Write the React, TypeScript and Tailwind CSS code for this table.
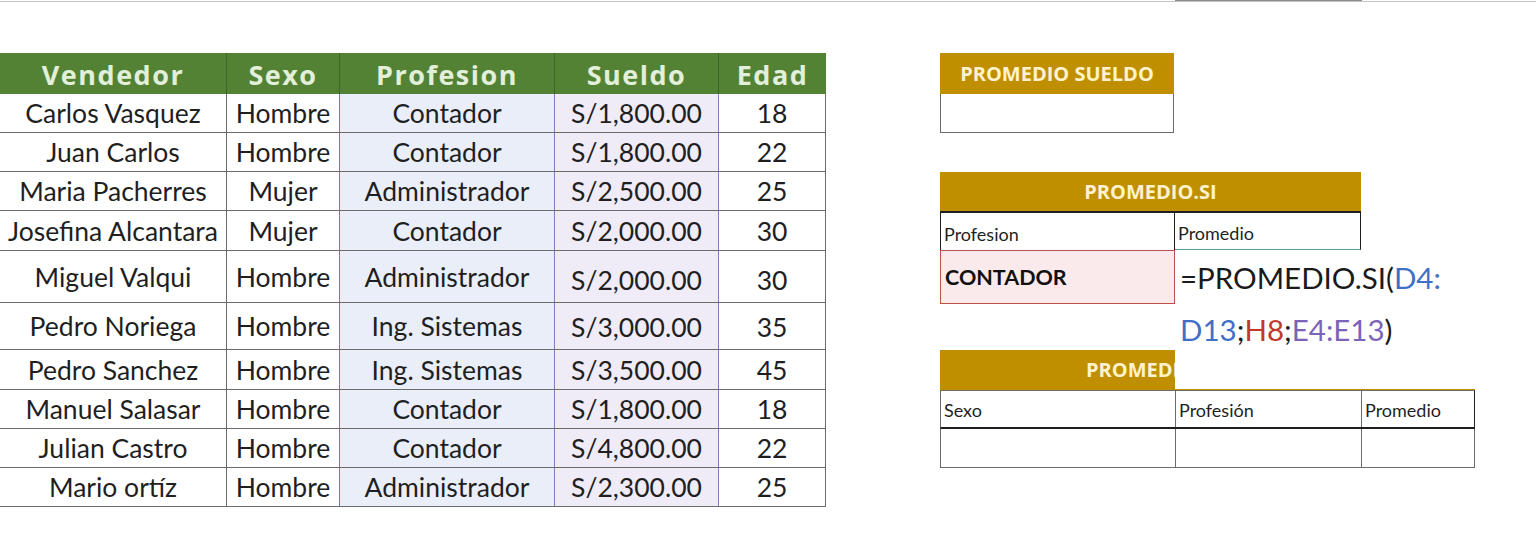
const rows = [
  { v: 'Carlos Vasquez', s: 'Hombre', p: 'Contador', m: 'S/1,800.00', e: '18', h: 'h-[39px]' },
  { v: 'Juan Carlos', s: 'Hombre', p: 'Contador', m: 'S/1,800.00', e: '22', h: 'h-[39px]' },
  { v: 'Maria Pacherres', s: 'Mujer', p: 'Administrador', m: 'S/2,500.00', e: '25', h: 'h-[39px]' },
  { v: 'Josefina Alcantara', s: 'Mujer', p: 'Contador', m: 'S/2,000.00', e: '30', h: 'h-[40px]' },
  { v: 'Miguel Valqui', s: 'Hombre', p: 'Administrador', m: 'S/2,000.00', e: '30', h: 'h-[52px]', low: true },
  { v: 'Pedro Noriega', s: 'Hombre', p: 'Ing. Sistemas', m: 'S/3,000.00', e: '35', h: 'h-[47px]', low: true },
  { v: 'Pedro Sanchez', s: 'Hombre', p: 'Ing. Sistemas', m: 'S/3,500.00', e: '45', h: 'h-[40px]' },
  { v: 'Manuel Salasar', s: 'Hombre', p: 'Contador', m: 'S/1,800.00', e: '18', h: 'h-[39px]' },
  { v: 'Julian Castro', s: 'Hombre', p: 'Contador', m: 'S/4,800.00', e: '22', h: 'h-[39px]' },
  { v: 'Mario ortíz', s: 'Hombre', p: 'Administrador', m: 'S/2,300.00', e: '25', h: 'h-[39px]' },
]

const heads = ['Vendedor', 'Sexo', 'Profesion', 'Sueldo', 'Edad']

export default function App() {
  return (
    <div className="w-[1536px] h-[543px] bg-white overflow-hidden relative font-['Lato',sans-serif] text-[#1f1f1f]">
      {/* strip at the top */}
      <div className="flex h-[2px] border-b border-[#c4c4c4]">
        <div className="w-[1175px]" />
        <div className="w-[187px] border-b border-[#8a8a8a]" />
      </div>

      <div className="flex pt-[51px]">
        {/* main table */}
        <div className="w-[826px]">
          <div className="grid grid-cols-[227px_113px_215px_164px_107px] h-[41px] bg-[#548235] leading-[32px]">
            {heads.map((t, i) => (
              <div
                key={t}
                className={`flex items-center justify-center pt-[3px] text-[27px] font-bold tracking-[1.5px] text-[#e2efda] font-['Open_Sans',sans-serif] ${
                  i < 4 ? 'border-r border-[#3f6328]' : ''
                }`}
              >
                {t}
              </div>
            ))}
          </div>
          {rows.map((r) => (
            <div
              key={r.v}
              className={`grid grid-cols-[227px_113px_215px_164px_107px] ${r.h} text-[26.5px] leading-[30px] border-b border-[#6b6b6b] overflow-hidden`}
            >
              <div className="flex items-center justify-center border-r border-[#6b6b6b] whitespace-nowrap">{r.v}</div>
              <div className="flex items-center justify-center border-r border-[#5b7fc6]">{r.s}</div>
              <div className="flex items-center justify-center bg-[#e9eef9] border-r border-[#8a78b8]">{r.p}</div>
              <div className={`flex justify-center bg-[#efecf8] border-r border-[#8a78b8] ${r.low ? 'items-end pb-[7px]' : 'items-center'}`}>
                {r.m}
              </div>
              <div className={`flex justify-center border-r border-[#6b6b6b] ${r.low ? 'items-end pb-[7px]' : 'items-center'}`}>
                {r.e}
              </div>
            </div>
          ))}
        </div>

        {/* right side */}
        <div className="ml-[114px] w-[540px] flex flex-col relative">
          <div className="w-[234px]">
            <div className="h-[41px] bg-[#bf8f00] flex items-center justify-center text-[20px] font-bold text-[#fff2cc] font-['Open_Sans',sans-serif]">
              PROMEDIO SUELDO
            </div>
            <div className="h-[39px] border border-t-0 border-[#6b6b6b]" />
          </div>

          <div className="mt-[39px] w-[421px]">
            <div className="h-[39px] bg-[#bf8f00] flex items-center justify-center text-[20px] font-bold text-[#fff2cc] font-['Open_Sans',sans-serif]">
              PROMEDIO.SI
            </div>
            <div className="grid grid-cols-[235px_186px] h-[39px] border-t-2 border-[#1f1f1f] text-[18px]">
              <div className="border-l border-r border-[#1f1f1f] flex items-end pl-[3px] pb-[2px]">Profesion</div>
              <div className="border-r border-b border-[#1f1f1f] border-b-[#5f9ea0] flex items-end pl-[3px] pb-[2px]">Promedio</div>
            </div>
            <div className="w-[235px] h-[54px] bg-[#fbeaec] border border-[#c0504d] flex items-center pl-[4px] text-[21.5px] font-bold text-[#111]">
              CONTADOR
            </div>
          </div>

          <div className="mt-[46px] w-[535px]">
            <div className="h-[40px] bg-[#bf8f00] flex items-center pl-[146px] text-[20px] font-bold text-[#fff2cc] font-['Open_Sans',sans-serif] whitespace-nowrap overflow-hidden">
              PROMEDIO.SI.CONJUNTO
            </div>
            <div className="grid grid-cols-[235px_186px_114px] h-[39px] border border-[#6b6b6b] border-r-[#1f1f1f] border-b-2 border-b-[#1f1f1f] text-[18px]">
              <div className="border-r border-[#6b6b6b] flex items-end pl-[3px] pb-[3px]">Sexo</div>
              <div className="border-r border-[#6b6b6b] flex items-end pl-[3px] pb-[3px]">Profesión</div>
              <div className="flex items-end pl-[3px] pb-[3px]">Promedio</div>
            </div>
            <div className="grid grid-cols-[235px_186px_114px] h-[39px] border border-t-0 border-[#6b6b6b]">
              <div className="border-r border-[#6b6b6b]" />
              <div className="border-r border-[#6b6b6b]" />
              <div />
            </div>
          </div>

          {/* cell editor spilling over */}
          <div className="absolute left-[235px] top-[197px] w-[361px] h-[139px] bg-white pl-[5px] pt-[2px] text-[29.5px] leading-[52px] text-[#1a1a1a]">
            <div>
              =PROMEDIO.SI(<span className="text-[#3f6fc6]">D4:</span>
            </div>
            <div>
              <span className="text-[#3f6fc6]">D13</span>;<span className="text-[#c0392b]">H8</span>;
              <span className="text-[#7b64b8]">E4:E13</span>)
            </div>
          </div>
        </div>
      </div>
    </div>
  )
}
